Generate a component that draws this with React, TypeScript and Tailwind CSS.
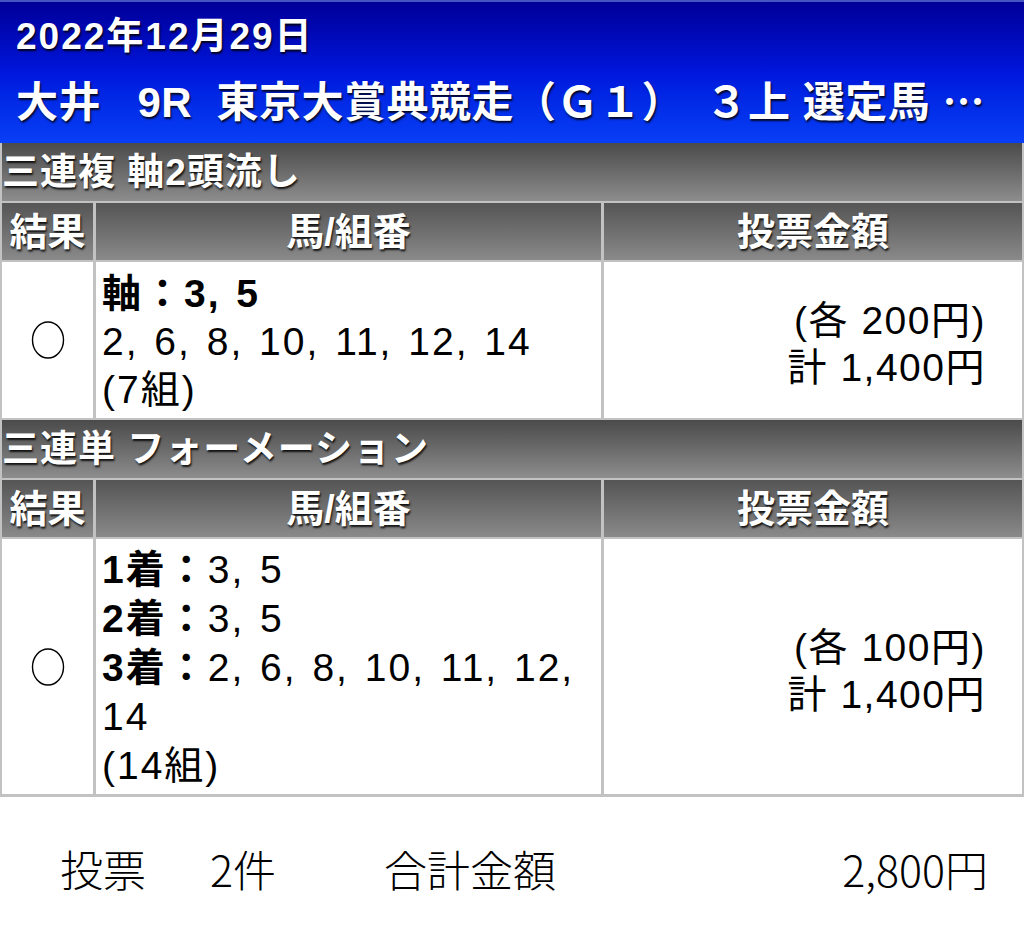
import { ReactNode } from "react";

const shadow = "[text-shadow:1px_2px_2px_rgba(0,0,0,0.85)]";

type Bet = {
  title: string;
  result: boolean;
  horses: ReactNode;
  unit: string;
  total: string;
  rowH: string;
  rowPad: string;
  amountPad: string;
};

const bets: Bet[] = [
  {
    title: "三連複 軸2頭流し",
    result: true,
    unit: "(各 200円)",
    total: "計 1,400円",
    rowH: "h-[156px]",
    rowPad: "pt-[8px] leading-[48px]",
    amountPad: "pt-[7px]",
    horses: (
      <>
        <div className="font-bold">軸：3, 5</div>
        <div>2, 6, 8, 10, 11, 12, 14</div>
        <div>(7組)</div>
      </>
    ),
  },
  {
    title: "三連単 フォーメーション",
    result: true,
    unit: "(各 100円)",
    total: "計 1,400円",
    rowH: "h-[255px]",
    rowPad: "pt-[6px] leading-[49px]",
    amountPad: "pt-[8px]",
    horses: (
      <>
        <div><b>1着：</b>3, 5</div>
        <div><b>2着：</b>3, 5</div>
        <div><b>3着：</b>2, 6, 8, 10, 11, 12,<br />14</div>
        <div>(14組)</div>
      </>
    ),
  },
];

function Circle() {
  return (
    <svg width="34" height="40" viewBox="0 0 34 40">
      <ellipse cx="17" cy="20" rx="15.5" ry="18" fill="none" stroke="#000" strokeWidth="1.4" />
    </svg>
  );
}

function BetSection({ bet }: { bet: Bet }) {
  return (
    <>
      <div className={`col-span-3 h-[58px] flex items-center bg-linear-to-b from-[#4b4b4b] to-[#8d8d8d] text-white text-[37px] tracking-[1px] font-semibold leading-none ${shadow}`}>
        {bet.title}
      </div>
      {["結果", "馬/組番", "投票金額"].map((h) => (
        <div key={h} className={`h-[57px] flex items-center justify-center bg-linear-to-b from-[#555555] to-[#8a8a8a] text-white text-[38px] font-bold leading-none ${shadow}`}>
          {h}
        </div>
      ))}
      <div className={`bg-white flex items-center justify-center ${bet.rowH}`}>
        {bet.result && <Circle />}
      </div>
      <div className={`bg-white pl-[6px] text-[39px] text-black tracking-[2px] [word-spacing:3px] ${bet.rowH} ${bet.rowPad}`}>
        {bet.horses}
      </div>
      <div className={`bg-white flex flex-col items-end justify-center pr-[36px] text-[39px] leading-[47px] text-black tracking-[1.5px] ${bet.amountPad}`}>
        <div>{bet.unit}</div>
        <div>{bet.total}</div>
      </div>
    </>
  );
}

export default function App() {
  return (
    <div className="w-[1024px] h-[927px] bg-white overflow-hidden font-['Liberation_Sans','Noto_Sans_CJK_JP',sans-serif]">
      <header className={`h-[143px] border-t-2 border-[#4656c4] bg-linear-to-b from-[#000098] via-[#0016dc] to-[#0a3ef6] px-[16px] pt-[15px] text-white font-bold ${shadow}`}>
        <div className="text-[37px] leading-[40px] tracking-[2px]">2022年12月29日</div>
        <div className="mt-[18px] text-[42px] leading-[48px] tracking-[0.5px] whitespace-pre">
          {"大井   9R  東京大賞典競走（Ｇ１）　３上 選定馬 "}
          <span className="font-['Noto_Sans_CJK_JP',sans-serif]">⋯</span>
        </div>
      </header>

      <div className="grid grid-cols-[91px_505px_1fr] gap-x-[3px] gap-y-[2px] bg-[#c2c2c2] px-[2px] pb-[3px]">
        {bets.map((b) => (
          <BetSection key={b.title} bet={b} />
        ))}
      </div>

      <div className="flex items-center h-[130px] pt-[12px] pl-[60px] pr-[36px] text-[43px] font-light text-black font-['Noto_Sans_CJK_JP',sans-serif]">
        <span>投票</span>
        <span className="ml-[64px]">2件</span>
        <span className="ml-[108px]">合計金額</span>
        <span className="ml-auto">2,800円</span>
      </div>
    </div>
  );
}
